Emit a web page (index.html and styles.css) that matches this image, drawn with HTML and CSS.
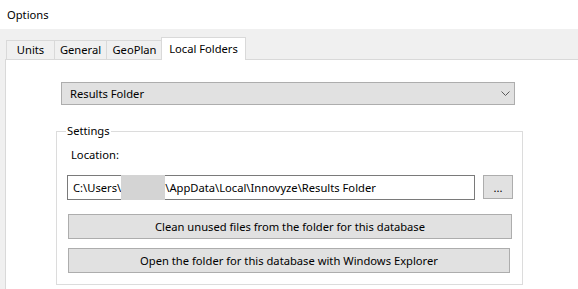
FILE: index.html
```html
<!DOCTYPE html>
<html>
  <head>
    <title>Options</title>
    <meta charset='utf-8'>
    <link rel="stylesheet" href="styles.css">
  </head>
  <body>
    <div class='titlebar'>Options</div>
    <div class='dialog'>
      <div class='tabs'>
        <div class='tab tab-units'>Units</div>
        <div class='tab tab-general'>General</div>
        <div class='tab tab-geoplan'>GeoPlan</div>
        <div class='tab tab-local selected'>Local Folders</div>
      </div>
      <div class='panel'>
        <div class='combo'>
          <span>Results Folder</span>
          <svg class='chevron' width='9' height='5' viewBox='0 0 9 5'>
            <path d='M0.5 0.5 L4.5 4.5 L8.5 0.5' fill='none' stroke='#5a5a5a' stroke-width='1'/>
          </svg>
        </div>
        <fieldset class='group'>
          <legend>Settings</legend>
          <div class='label'>Location:</div>
          <div class='location-row'>
            <div class='textbox'>C:\Users\<span class='redact'></span>\AppData\Local\Innovyze\Results Folder</div>
            <button class='btn btn-browse'>...</button>
          </div>
          <button class='btn btn-wide btn-clean'>Clean unused files from the folder for this database</button>
          <button class='btn btn-wide btn-open'>Open the folder for this database with Windows Explorer</button>
        </fieldset>
      </div>
    </div>
  </body>
</html>
```

FILE: styles.css
```css
body {
  font-family: "Noto Sans", "Open Sans", sans-serif;
  font-size: 11.2px;
  background: #f0f0f0;
  color: #000;
  margin: 0;
  padding: 0;
  height: 289px;
  overflow: hidden;
}

.titlebar {
  height: 29px;
  background: #fff;
  padding-left: 7px;
  display: flex;
  align-items: center;
}

.dialog {
  padding: 8px 0 0 5px;
}

/* Tab strip */
.tabs {
  display: flex;
  align-items: flex-end;
  height: 22px;
  padding-left: 1px;
}
.tab {
  box-sizing: border-box;
  height: 19px;
  line-height: 17px;
  border: 1px solid #d9d9d9;
  border-bottom: none;
  background: #f0f0f0;
  margin-right: -1px;
  text-align: center;
}
.tab-units { width: 49px; }
.tab-general { width: 53px; }
.tab-geoplan { width: 57px; margin-right: -2px; }
.tab.selected {
  position: relative;
  z-index: 1;
  width: 85px;
  height: 23px;
  line-height: 21px;
  margin-bottom: -1px;
  background: #fff;
}

/* Page body */
.panel {
  background: #fff;
  border: 1px solid #d9d9d9;
  margin-right: -10px;
  height: 240px;
  padding-left: 55px;
}

.combo {
  box-sizing: border-box;
  width: 454px;
  height: 23px;
  margin-top: 22px;
  border: 1px solid #adadad;
  background: #e1e1e1;
  padding: 0 4px 0 8px;
  display: flex;
  align-items: center;
  justify-content: space-between;
}

.group {
  box-sizing: border-box;
  width: 467px;
  margin: 18px 0 0 -5px;
  padding: 0 0 11px 0;
  border: 1px solid #dcdcdc;
}
.group legend {
  margin-left: 9px;
  padding: 0 1px;
  line-height: 16px;
}

.label {
  margin: 8px 0 0 14px;
  line-height: 16px;
}

.location-row {
  display: flex;
  align-items: flex-start;
  margin: 12px 0 0 10px;
}
.textbox {
  box-sizing: border-box;
  width: 408px;
  height: 25px;
  border: 1px solid #7a7a7a;
  padding-left: 5px;
  display: flex;
  align-items: center;
  white-space: nowrap;
}
.redact {
  display: inline-block;
  width: 44px;
  height: 25px;
  background: #d4d4d4;
}

.btn {
  box-sizing: border-box;
  font-family: inherit;
  font-size: 11.2px;
  color: #000;
  background: #e1e1e1;
  border: 1px solid #adadad;
  padding: 0;
  display: block;
}
.btn-browse {
  width: 30px;
  height: 24px;
  margin-left: 8px;
}
.btn-wide {
  height: 25px;
  margin-left: 11px;
}
.btn-clean {
  width: 444px;
  margin-top: 14px;
}
.btn-open {
  width: 442px;
  margin-top: 9px;
}
```
